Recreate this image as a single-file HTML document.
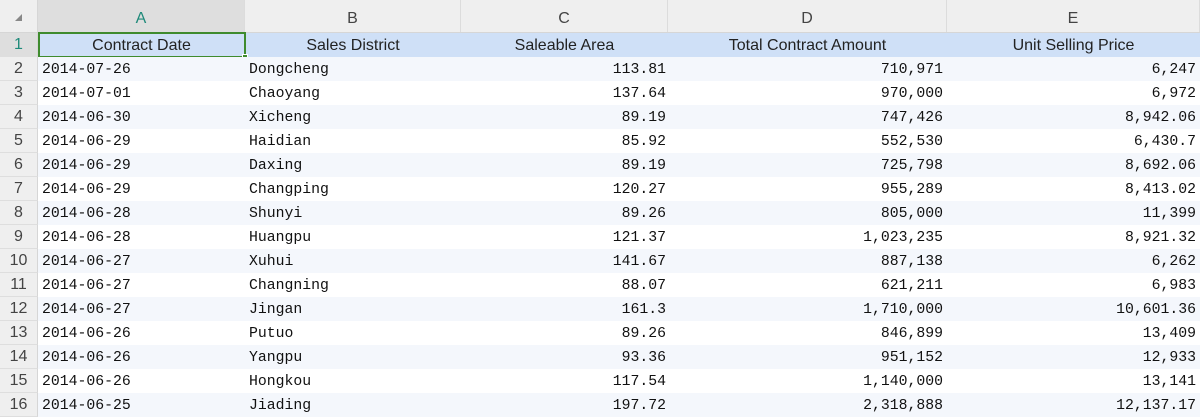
<!DOCTYPE html><html><head><style>
body{margin:0;width:1200px;height:419px;overflow:hidden;background:#fff;font-family:"Liberation Sans",sans-serif;position:relative}
.a{position:absolute;box-sizing:border-box}
.ch{top:0;height:33px;background:#efefef;color:#444;font-size:16px;text-align:center;line-height:38px;border-right:1px solid #dcdcdc}
.rn{left:0;width:38px;height:24px;background:#efefef;color:#444;font-size:16px;text-align:center;line-height:24px;border-bottom:1px solid #dedede;border-right:1px solid #d6d6d6}
.row{left:38px;width:1162px;height:24px}
.c{position:absolute;top:0;height:24px;line-height:26px;font-family:"Liberation Mono",monospace;font-size:14.8px;color:#111;white-space:pre;box-sizing:border-box}
.h{font-family:"Liberation Sans",sans-serif;font-size:16px;text-align:center;color:#222;line-height:25px}
</style></head><body>
<div class="a" style="left:0;top:0;width:38px;height:33px;background:#efefef;border-right:1px solid #d6d6d6"></div>
<div class="a" style="left:15px;top:14px;width:0;height:0;border-left:7px solid transparent;border-bottom:7px solid #888"></div>
<div class="a ch" style="left:38px;width:207px;background:#dedede;color:#1f8a7a">A</div>
<div class="a ch" style="left:245px;width:216px">B</div>
<div class="a ch" style="left:461px;width:207px">C</div>
<div class="a ch" style="left:668px;width:279px">D</div>
<div class="a ch" style="left:947px;width:253px">E</div>
<div class="a" style="left:0;top:32px;width:1200px;height:1px;background:#d6d6d6"></div>
<div class="a rn" style="top:33px;background:#dedede;color:#1f8a7a">1</div>
<div class="a row" style="top:33px;background:#cfe0f7">
<div class="c h" style="left:0;width:207px">Contract Date</div>
<div class="c h" style="left:207px;width:216px">Sales District</div>
<div class="c h" style="left:423px;width:207px">Saleable Area</div>
<div class="c h" style="left:630px;width:279px">Total Contract Amount</div>
<div class="c h" style="left:909px;width:253px">Unit Selling Price</div>
</div>
<div class="a" style="left:38px;top:32px;width:208px;height:26px;border:2px solid #3f8b2e"></div>
<div class="a" style="left:242px;top:54px;width:6px;height:6px;background:#3f8b2e;border:1px solid #fff"></div>

<div class="a rn" style="top:57px">2</div><div class="a row" style="top:57px;background:#f4f7fc"><div class="c" style="left:4px">2014-07-26</div><div class="c" style="left:211px">Dongcheng</div><div class="c" style="right:534px">113.81</div><div class="c" style="right:257px">710,971</div><div class="c" style="right:4px">6,247</div></div>
<div class="a rn" style="top:81px">3</div><div class="a row" style="top:81px"><div class="c" style="left:4px">2014-07-01</div><div class="c" style="left:211px">Chaoyang</div><div class="c" style="right:534px">137.64</div><div class="c" style="right:257px">970,000</div><div class="c" style="right:4px">6,972</div></div>
<div class="a rn" style="top:105px">4</div><div class="a row" style="top:105px;background:#f4f7fc"><div class="c" style="left:4px">2014-06-30</div><div class="c" style="left:211px">Xicheng</div><div class="c" style="right:534px">89.19</div><div class="c" style="right:257px">747,426</div><div class="c" style="right:4px">8,942.06</div></div>
<div class="a rn" style="top:129px">5</div><div class="a row" style="top:129px"><div class="c" style="left:4px">2014-06-29</div><div class="c" style="left:211px">Haidian</div><div class="c" style="right:534px">85.92</div><div class="c" style="right:257px">552,530</div><div class="c" style="right:4px">6,430.7</div></div>
<div class="a rn" style="top:153px">6</div><div class="a row" style="top:153px;background:#f4f7fc"><div class="c" style="left:4px">2014-06-29</div><div class="c" style="left:211px">Daxing</div><div class="c" style="right:534px">89.19</div><div class="c" style="right:257px">725,798</div><div class="c" style="right:4px">8,692.06</div></div>
<div class="a rn" style="top:177px">7</div><div class="a row" style="top:177px"><div class="c" style="left:4px">2014-06-29</div><div class="c" style="left:211px">Changping</div><div class="c" style="right:534px">120.27</div><div class="c" style="right:257px">955,289</div><div class="c" style="right:4px">8,413.02</div></div>
<div class="a rn" style="top:201px">8</div><div class="a row" style="top:201px;background:#f4f7fc"><div class="c" style="left:4px">2014-06-28</div><div class="c" style="left:211px">Shunyi</div><div class="c" style="right:534px">89.26</div><div class="c" style="right:257px">805,000</div><div class="c" style="right:4px">11,399</div></div>
<div class="a rn" style="top:225px">9</div><div class="a row" style="top:225px"><div class="c" style="left:4px">2014-06-28</div><div class="c" style="left:211px">Huangpu</div><div class="c" style="right:534px">121.37</div><div class="c" style="right:257px">1,023,235</div><div class="c" style="right:4px">8,921.32</div></div>
<div class="a rn" style="top:249px">10</div><div class="a row" style="top:249px;background:#f4f7fc"><div class="c" style="left:4px">2014-06-27</div><div class="c" style="left:211px">Xuhui</div><div class="c" style="right:534px">141.67</div><div class="c" style="right:257px">887,138</div><div class="c" style="right:4px">6,262</div></div>
<div class="a rn" style="top:273px">11</div><div class="a row" style="top:273px"><div class="c" style="left:4px">2014-06-27</div><div class="c" style="left:211px">Changning</div><div class="c" style="right:534px">88.07</div><div class="c" style="right:257px">621,211</div><div class="c" style="right:4px">6,983</div></div>
<div class="a rn" style="top:297px">12</div><div class="a row" style="top:297px;background:#f4f7fc"><div class="c" style="left:4px">2014-06-27</div><div class="c" style="left:211px">Jingan</div><div class="c" style="right:534px">161.3</div><div class="c" style="right:257px">1,710,000</div><div class="c" style="right:4px">10,601.36</div></div>
<div class="a rn" style="top:321px">13</div><div class="a row" style="top:321px"><div class="c" style="left:4px">2014-06-26</div><div class="c" style="left:211px">Putuo</div><div class="c" style="right:534px">89.26</div><div class="c" style="right:257px">846,899</div><div class="c" style="right:4px">13,409</div></div>
<div class="a rn" style="top:345px">14</div><div class="a row" style="top:345px;background:#f4f7fc"><div class="c" style="left:4px">2014-06-26</div><div class="c" style="left:211px">Yangpu</div><div class="c" style="right:534px">93.36</div><div class="c" style="right:257px">951,152</div><div class="c" style="right:4px">12,933</div></div>
<div class="a rn" style="top:369px">15</div><div class="a row" style="top:369px"><div class="c" style="left:4px">2014-06-26</div><div class="c" style="left:211px">Hongkou</div><div class="c" style="right:534px">117.54</div><div class="c" style="right:257px">1,140,000</div><div class="c" style="right:4px">13,141</div></div>
<div class="a rn" style="top:393px">16</div><div class="a row" style="top:393px;background:#f4f7fc"><div class="c" style="left:4px">2014-06-25</div><div class="c" style="left:211px">Jiading</div><div class="c" style="right:534px">197.72</div><div class="c" style="right:257px">2,318,888</div><div class="c" style="right:4px">12,137.17</div></div>
</body></html>
